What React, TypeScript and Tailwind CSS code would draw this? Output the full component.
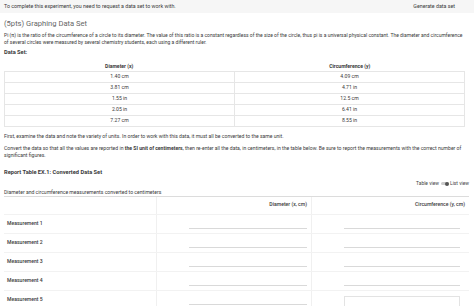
import React from "react";

const rows = [
  ["1.40 cm", "4.09 cm"],
  ["3.81 cm", "4.71 in"],
  ["1.55 in", "12.5 cm"],
  ["2.05 in", "6.41 in"],
  ["7.27 cm", "8.55 in"],
];

export default function App() {
  return (
    <div
      className="w-[474px] h-[306px] overflow-hidden bg-white text-[#3a3a3a]"
      style={{ fontFamily: "Roboto, 'Liberation Sans', sans-serif" }}
    >
      <div className="h-[13px] bg-[#f6f6f6] flex items-center justify-between pl-[4px] pr-[19px] text-[5.3px]">
        <span>To complete this experiment, you need to request a data set to work with.</span>
        <span>Generate data set</span>
      </div>
      <div className="pl-[4px] pr-[5px]">
        <h1 className="mt-[6px] text-[7.6px] leading-[10px] text-[#666]">(5pts) Graphing Data Set</h1>
        <p className="mt-[3px] mr-[2px] text-[5px] leading-[7px]">
          Pi (π) is the ratio of the circumference of a circle to its diameter. The value of this ratio is a constant regardless of the size of the circle, thus pi is a universal physical constant. The diameter and circumference of several circles were measured by several chemistry students, each using a different ruler.
        </p>
        <h2 className="mt-[2px] font-bold text-[5.7px] leading-[8px]">Data Set:</h2>
        <div className="mt-[6px] mr-[4px] text-[5.1px]">
          <div className="grid grid-cols-2 h-[9px] items-center font-bold text-center">
            <div>Diameter (x)</div>
            <div>Circumference (y)</div>
          </div>
          <div className="border-t border-l border-[#e6e6e6]">
            {rows.map((r, i) => (
              <div key={i} className="grid grid-cols-2 h-[11px]">
                <div className="border-r border-b border-[#e6e6e6] flex items-center justify-center">{r[0]}</div>
                <div className="border-r border-b border-[#e6e6e6] flex items-center justify-center">{r[1]}</div>
              </div>
            ))}
          </div>
        </div>
        <p className="mt-[6px] text-[5.1px] leading-[7px]">
          First, examine the data and note the variety of units. In order to work with this data, it must all be converted to the same unit.
        </p>
        <p className="mt-[5px] mr-[4px] text-[5.1px] leading-[6.5px]">
          Convert the data so that all the values are reported in <b>the SI unit of centimeters</b>, then re-enter all the data, in centimeters, in the table below. Be sure to report the measurements with the correct number of significant figures.
        </p>
        <h2 className="mt-[10px] font-bold text-[5.7px] leading-[8px]">Report Table EX.1: Converted Data Set</h2>
        <div className="mt-[4px] h-[7px] flex items-center justify-end gap-[1.5px] text-[4.9px] text-[#444]">
          <span>Table view</span>
          <span className="relative w-[8px] h-[4px] flex items-center">
            <span className="w-[8px] h-[2.5px] rounded-full bg-[#ccc]" />
            <span className="absolute right-0 w-[4px] h-[4px] rounded-full bg-[#555]" />
          </span>
          <span>List view</span>
        </div>
        <div className="mt-[2px] text-[5.1px] leading-[7px] border-b border-[#dcdcdc]">
          Diameter and circumference measurements converted to centimeters
        </div>
        <div className="grid grid-cols-[153px_155px_157px] h-[17px] font-medium text-[5.1px] leading-[7px]">
          <div className="border-r border-[#f0f0f0]" />
          <div className="border-r border-[#f0f0f0] text-right pr-[4px] pt-[4px]">Diameter (x, cm)</div>
          <div className="text-right pr-[4px] pt-[4px]">Circumference (y, cm)</div>
        </div>
        {[1, 2, 3, 4, 5].map((n) => (
          <div
            key={n}
            className="grid grid-cols-[153px_155px_157px] h-[19px] text-[5.1px] border-t border-[#f2f2f2]"
          >
            <div className="border-r border-[#f0f0f0] flex items-center pl-[3px] font-medium">
              Measurement {n}
            </div>
            <div className="border-r border-[#f0f0f0] flex items-center justify-end pr-[4px]">
              <div className="w-[118px] h-[9px] border-b border-[#d9d9d9]" />
            </div>
            <div className="flex items-center justify-end pr-[9px]">
              {n === 5 ? (
                <div className="w-[116px] h-[11px] border border-[#e3e3e3] border-b-[#5b7482] mt-[2px]" />
              ) : (
                <div className="w-[116px] h-[9px] border-b border-[#d9d9d9]" />
              )}
            </div>
          </div>
        ))}
      </div>
    </div>
  );
}
